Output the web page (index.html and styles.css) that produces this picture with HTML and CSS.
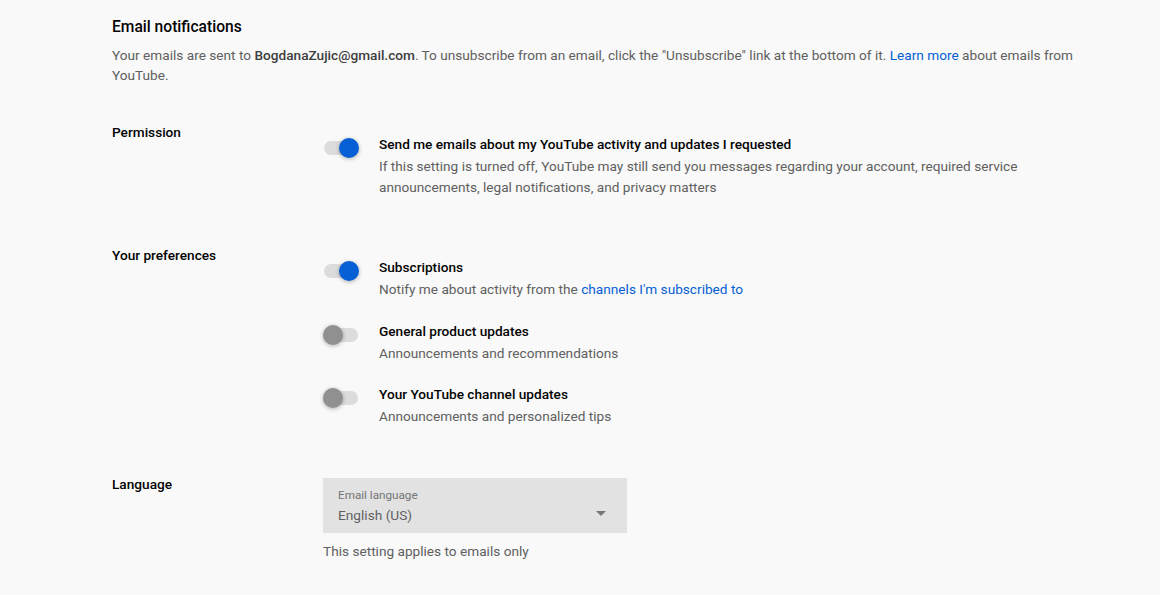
FILE: index.html
```html
<!DOCTYPE html>
<html lang="en">
<head>
    <meta charset="UTF-8">
    <meta name="viewport" content="width=device-width, initial-scale=1.0">
    <title>Notifications - YouTube</title>
    <link rel="stylesheet" href="styles.css">
</head>
<body>
    <div class="settings">
        <h2 class="title">Email notifications</h2>
        <p class="intro">
            Your emails are sent to <b>BogdanaZujic@gmail.com</b>. To unsubscribe from an email, click the "Unsubscribe" link at the bottom of it. <a href="#">Learn more</a> about emails from YouTube.
        </p>

        <div class="section">
            <div class="label">Permission</div>
            <div class="items">
                <div class="item">
                    <div class="toggle on"><span class="knob"></span></div>
                    <div class="text">
                        <div class="name">Send me emails about my YouTube activity and updates I requested</div>
                        <div class="desc">If this setting is turned off, YouTube may still send you messages regarding your account, required service announcements, legal notifications, and privacy matters</div>
                    </div>
                </div>
            </div>
        </div>

        <div class="section">
            <div class="label">Your preferences</div>
            <div class="items">
                <div class="item">
                    <div class="toggle on"><span class="knob"></span></div>
                    <div class="text">
                        <div class="name">Subscriptions</div>
                        <div class="desc">Notify me about activity from the <a href="#">channels I'm subscribed to</a></div>
                    </div>
                </div>
                <div class="item">
                    <div class="toggle"><span class="knob"></span></div>
                    <div class="text">
                        <div class="name">General product updates</div>
                        <div class="desc">Announcements and recommendations</div>
                    </div>
                </div>
                <div class="item">
                    <div class="toggle"><span class="knob"></span></div>
                    <div class="text">
                        <div class="name">Your YouTube channel updates</div>
                        <div class="desc">Announcements and personalized tips</div>
                    </div>
                </div>
            </div>
        </div>

        <div class="section">
            <div class="label">Language</div>
            <div class="items lang">
                <div class="dropdown">
                    <div class="field">
                        <div class="field-label">Email language</div>
                        <div class="field-value">English (US)</div>
                    </div>
                    <span class="arrow"></span>
                </div>
                <div class="hint">This setting applies to emails only</div>
            </div>
        </div>
    </div>
</body>
</html>
```

FILE: styles.css
```css
body {
    margin: 0;
    background: #f9f9f9;
    font-family: Roboto, "Liberation Sans", Arial, sans-serif;
    font-size: 13.65px;
    color: #606060;
}

a {
    color: #065fd4;
    text-decoration: none;
}

.settings {
    width: 990px;
    padding: 15px 0 40px 112px;
}

.title {
    margin: 0;
    font-size: 15.6px;
    font-weight: 500;
    line-height: 24px;
    color: #030303;
}

.intro {
    margin: 6px 0 0;
    line-height: 20px;
}

.intro b {
    font-weight: 500;
    color: #3d3d3d;
}

.section {
    display: flex;
    margin-top: 37px;
}

.section + .section {
    margin-top: 47px;
}

.label {
    width: 211px;
    flex-shrink: 0;
    line-height: 20px;
    font-weight: 500;
    color: #030303;
}

.items {
    flex: 1;
    display: flex;
    flex-direction: column;
    gap: 19.5px;
    padding-top: 11px;
}

.item {
    display: flex;
}

.toggle {
    position: relative;
    width: 36px;
    height: 20px;
    margin: 5px 20px 0 0;
    flex-shrink: 0;
}

.toggle::before {
    content: "";
    position: absolute;
    left: 1px;
    right: 1px;
    top: 3px;
    height: 14px;
    border-radius: 7px;
    background: #dcdcdc;
}

.knob {
    position: absolute;
    top: 0;
    left: 0;
    width: 20px;
    height: 20px;
    border-radius: 50%;
    background: #909090;
    box-shadow: 0 1px 4px rgba(0, 0, 0, 0.3);
}

.toggle.on .knob {
    left: 16px;
    background: #065fd4;
}

.text {
    flex: 1;
}

.name {
    line-height: 22px;
    font-weight: 500;
    color: #030303;
}

.desc {
    margin-top: 1px;
    line-height: 21px;
}

.items.lang {
    gap: 8px;
    padding-top: 4px;
}

.dropdown {
    width: 304px;
    height: 55px;
    box-sizing: border-box;
    padding: 10px 21px 0 15px;
    background: #e2e2e2;
    display: flex;
    align-items: center;
}

.field {
    flex: 1;
    align-self: flex-start;
}

.field-label {
    font-size: 11.7px;
    line-height: 14px;
    color: #757575;
}

.field-value {
    margin-top: 2px;
    font-size: 13.7px;
    line-height: 22px;
    color: #606060;
}

.arrow {
    width: 0;
    height: 0;
    border-left: 5px solid transparent;
    border-right: 5px solid transparent;
    border-top: 5px solid #777;
    margin-top: 5px;
}

.hint {
    line-height: 20px;
}
```
